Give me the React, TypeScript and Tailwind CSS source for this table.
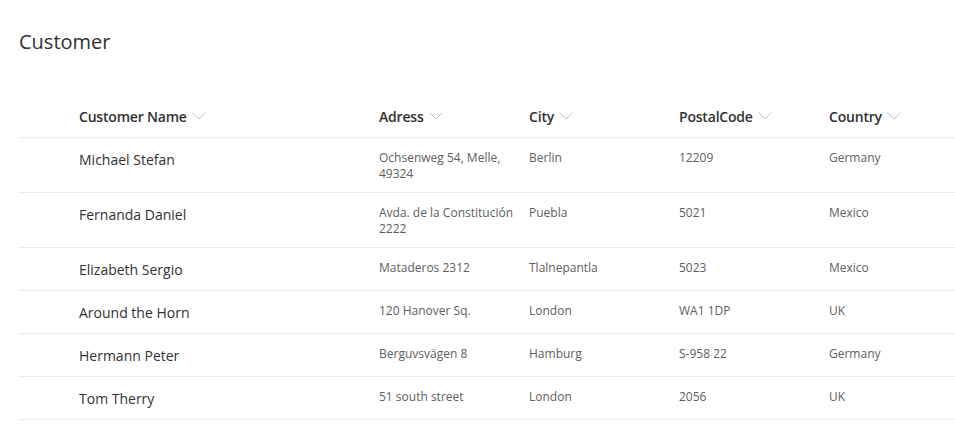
type Customer = {
  name: string;
  address: string;
  city: string;
  postal: string;
  country: string;
};

const customers: Customer[] = [
  { name: "Michael Stefan", address: "Ochsenweg 54, Melle, 49324", city: "Berlin", postal: "12209", country: "Germany" },
  { name: "Fernanda Daniel", address: "Avda. de la Constitución 2222", city: "Puebla", postal: "5021", country: "Mexico" },
  { name: "Elizabeth Sergio", address: "Mataderos 2312", city: "Tlalnepantla", postal: "5023", country: "Mexico" },
  { name: "Around the Horn", address: "120 Hanover Sq.", city: "London", postal: "WA1 1DP", country: "UK" },
  { name: "Hermann Peter", address: "Berguvsvägen 8", city: "Hamburg", postal: "S-958 22", country: "Germany" },
  { name: "Tom Therry", address: "51 south street", city: "London", postal: "2056", country: "UK" },
];

const columns = [
  { label: "Customer Name", width: "w-[300px]" },
  { label: "Adress", width: "w-[150px]" },
  { label: "City", width: "w-[150px]" },
  { label: "PostalCode", width: "w-[150px]" },
  { label: "Country", width: "w-[126px]" },
];

function Chevron() {
  return (
    <svg width="14" height="8" viewBox="0 0 14 8" fill="none">
      <polyline points="0.5,0.5 7,7 13.5,0.5" stroke="#c8c6c4" strokeWidth="1" />
    </svg>
  );
}

function HeaderCell({ label, width }: { label: string; width: string }) {
  return (
    <div className={`${width} shrink-0 flex items-center gap-[5px] pr-3`}>
      <span className="text-[14px] font-semibold tracking-[-0.2px] text-[#323130]">{label}</span>
      <Chevron />
    </div>
  );
}

const small = "shrink-0 pr-3 text-[12px] leading-[16px] text-[#605e5c]";

export default function App() {
  return (
    <div className="min-h-screen bg-white font-['Open_Sans',sans-serif]">
      <div className="pl-[19px] pt-[28px]">
        <h1 className="text-[20px] leading-[28px] text-[#323130]">Customer</h1>

        <div className="mt-[40px]">
          {/* header */}
          <div className="flex h-[42px] items-center border-b border-[#edebe9] pb-[1px]">
            <div className="w-[60px] shrink-0" />
            {columns.map((c) => (
              <HeaderCell key={c.label} label={c.label} width={c.width} />
            ))}
          </div>

          {customers.map((c) => (
            <div key={c.name} className="flex border-b border-[#edebe9] pt-[12px] pb-[10px]">
              <div className="w-[60px] shrink-0" />
              <div className="w-[300px] shrink-0 pr-3 text-[14px] leading-[20px] text-[#323130]">{c.name}</div>
              <div className={`w-[150px] ${small}`}>{c.address}</div>
              <div className={`w-[150px] ${small}`}>{c.city}</div>
              <div className={`w-[150px] ${small}`}>{c.postal}</div>
              <div className={`w-[126px] ${small}`}>{c.country}</div>
            </div>
          ))}
        </div>
      </div>
    </div>
  );
}
